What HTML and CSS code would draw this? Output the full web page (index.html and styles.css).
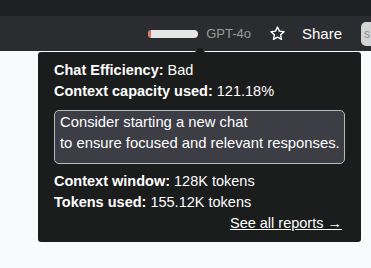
FILE: index.html
```html
<!DOCTYPE html>
<html>
<head>
<meta charset="utf-8">
<link rel="stylesheet" href="styles.css">
</head>
<body>
<div class="topstrip"></div>
<header class="header">
  <div class="meter"><div class="meter-fill" style="width:6%"></div></div>
  <span class="model">GPT-4o</span>
  <svg class="star" width="17" height="17" viewBox="0 0 24 24"><path d="M12 2.8l2.75 5.9 6.45.75-4.8 4.4 1.3 6.4L12 17l-5.7 3.25 1.3-6.4-4.8-4.4 6.45-.75z" fill="none" stroke="#fff" stroke-width="2" stroke-linejoin="round"/></svg>
  <span class="share">Share</span>
  <span class="signbtn">s</span>
</header>
<main class="content"></main>
<div class="tip-arrow"></div>
<div class="tooltip">
  <div class="line"><b>Chat Efficiency:</b> Bad</div>
  <div class="line"><b>Context capacity used:</b> 121.18%</div>
  <div class="notice">Consider starting a new chat<br>to ensure focused and relevant responses.</div>
  <div class="line"><b>Context window:</b> 128K tokens</div>
  <div class="line"><b>Tokens used:</b> 155.12K tokens</div>
  <div class="line right"><a class="reports" href="#">See all reports →</a></div>
</div>
</body>
</html>
```
FILE: styles.css
```css
html, body {
  margin: 0;
  padding: 0;
  width: 371px;
  height: 268px;
  overflow: hidden;
  background: #f9fafb;
  font-family: "Liberation Sans", Arial, sans-serif;
}
.topstrip {
  height: 16px;
  background: #1f2023;
}
.header {
  height: 35px;
  background: #2b2c2f;
  display: flex;
  align-items: center;
  justify-content: flex-end;
  white-space: nowrap;
}
.meter {
  width: 50px;
  height: 8px;
  border-radius: 4px;
  background: #e6e6e6;
  overflow: hidden;
  margin-right: 8px;
}
.meter-fill {
  height: 100%;
  background: #e8705f;
}
.model {
  color: #9b9b9b;
  font-size: 13px;
  margin-right: 18px;
}
.star {
  margin-right: 16px;
}
.share {
  color: #fff;
  font-size: 15px;
  margin-right: 19px;
}
.signbtn {
  flex: none;
  width: 40px;
  height: 24px;
  line-height: 24px;
  border-radius: 5px;
  background: #d4d4d4;
  color: #8a8a8a;
  font-size: 12px;
  padding-left: 3px;
  margin-right: -30px;
  box-sizing: border-box;
}
.tip-arrow {
  position: absolute;
  left: 195px;
  top: 47px;
  width: 0;
  height: 0;
  border-left: 5px solid transparent;
  border-right: 5px solid transparent;
  border-bottom: 5px solid #1b1c1c;
}
.tooltip {
  position: absolute;
  left: 38px;
  top: 52px;
  width: 323px;
  box-sizing: border-box;
  background: #1b1c1c;
  border-radius: 3px;
  padding: 8px 16px 8px 16px;
  color: #fff;
  font-size: 14.5px;
  line-height: 21px;
}
.line b {
  font-weight: bold;
}
.notice {
  margin: 8px 0 7px 0;
  background: #3d3d45;
  border: 1px solid #b8b8be;
  border-radius: 5px;
  padding: 1px 4px 9px 5px;
  white-space: nowrap;
  font-size: 14.8px;
}
.right {
  text-align: right;
  padding-right: 3px;
}
.reports {
  color: #fff;
  text-decoration: underline;
}
```
